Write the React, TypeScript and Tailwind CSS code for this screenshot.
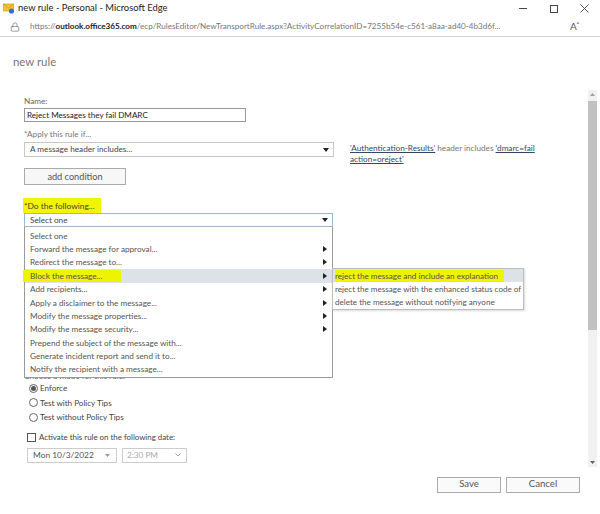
import { Lock } from "lucide-react";

const font = { fontFamily: 'Lato, "Open Sans", sans-serif' };

const actions = [
  { label: "Select one", sub: false },
  { label: "Forward the message for approval...", sub: true },
  { label: "Redirect the message to...", sub: true },
  { label: "Block the message...", sub: true, active: true },
  { label: "Add recipients...", sub: true },
  { label: "Apply a disclaimer to the message...", sub: true },
  { label: "Modify the message properties...", sub: true },
  { label: "Modify the message security...", sub: true },
  { label: "Prepend the subject of the message with...", sub: false },
  { label: "Generate incident report and send it to...", sub: false },
  { label: "Notify the recipient with a message...", sub: false },
];

const blockOptions = [
  "reject the message and include an explanation",
  "reject the message with the enhanced status code of",
  "delete the message without notifying anyone",
];

const Caret = () => (
  <svg width="6" height="4" viewBox="0 0 6 4" className="shrink-0">
    <path d="M0 0h6L3 4z" fill="#222" />
  </svg>
);

const SubArrow = () => (
  <svg width="4" height="6" viewBox="0 0 4 6" className="shrink-0">
    <path d="M0 0l4 3-4 3z" fill="#222" />
  </svg>
);

const TitleBar = () => (
  <div className="flex h-[17px] items-center bg-white pl-[3px]">
    <svg width="12" height="11" viewBox="0 0 12 11">
      <rect x="0.5" y="1" width="10" height="7" fill="#f4c430" stroke="#c9961a" strokeWidth="0.6" />
      <path d="M0.5 1l5 4 5-4" fill="none" stroke="#b7851a" strokeWidth="0.6" />
      <circle cx="8.5" cy="8" r="2.6" fill="#3a6fc4" />
    </svg>
    <span className="ml-[3px] text-[9.4px] text-[#222]">new rule - Personal - Microsoft Edge</span>
    <div className="ml-auto flex items-center">
      <div className="w-[31px] flex justify-center">
        <div className="h-px w-[8px] bg-[#444]" />
      </div>
      <div className="w-[31px] flex justify-center">
        <div className="h-[8px] w-[8px] border border-[#444]" />
      </div>
      <div className="w-[31px] flex justify-center">
        <svg width="9" height="9" viewBox="0 0 9 9">
          <path d="M0.5 0.5l8 8M8.5 0.5l-8 8" stroke="#444" strokeWidth="0.9" />
        </svg>
      </div>
    </div>
  </div>
);

const AddressBar = () => (
  <div className="flex h-[20px] items-center border-b border-[#d4d4d4] bg-white pl-[10px]">
    <Lock size={10} strokeWidth={1.5} color="#666" />
    <span className="ml-[10px] whitespace-nowrap text-[8.1px] text-[#777]">
      https://<span className="font-bold text-[#1a1a1a]">outlook.office365.com</span>
      /ecp/RulesEditor/NewTransportRule.aspx?ActivityCorrelationID=7255b54e-c561-a8aa-ad40-4b3d6f...
    </span>
    <span className="ml-auto mr-[21px] text-[10px] text-[#555]">
      A<sup className="text-[6px]">ᴬ</sup>
    </span>
  </div>
);

const Scrollbar = () => (
  <div className="mt-[53px] mr-[3px] flex h-[377px] w-[9px] flex-col items-center bg-[#f1f1f1]">
    <svg width="5" height="3" viewBox="0 0 5 3" className="mt-[3px]">
      <path d="M0 3l2.5-3 2.5 3z" fill="#a0a0a0" />
    </svg>
    <div className="mt-[5px] h-[229px] w-[9px] bg-[#c1c1c1]" />
    <svg width="5" height="3" viewBox="0 0 5 3" className="mt-auto mb-[3px]">
      <path d="M0 0h5l-2.5 3z" fill="#606060" />
    </svg>
  </div>
);

const Radio = ({ label, checked }: { label: string; checked?: boolean }) => (
  <div className="flex h-[14.5px] items-center">
    <div className="flex h-[9px] w-[9px] items-center justify-center rounded-full border border-[#666] bg-white">
      {checked && <div className="h-[5px] w-[5px] rounded-full bg-[#555]" />}
    </div>
    <span className="ml-[2px] text-[8.1px] text-[#444]">{label}</span>
  </div>
);

export default function App() {
  return (
    <div className="flex h-[514px] w-[600px] flex-col overflow-hidden bg-white" style={font}>
      <TitleBar />
      <AddressBar />
      <div className="flex flex-1">
        <div className="flex-1">
          <div className="mt-[17px] ml-[13px] h-[15px] text-[11.4px] leading-[15px] text-[#777]">new rule</div>

          <div className="relative pl-[24px]">
            <div className="mt-[27px] h-[10px] text-[8.2px] leading-[10px] text-[#666]">Name:</div>
            <div className="mt-[2px] flex h-[14px] w-[222px] items-center border border-[#999] pl-[2px] text-[8.1px] text-[#222]">
              Reject Messages they fail DMARC
            </div>

            <div className="mt-[7px] h-[10px] text-[8.2px] leading-[10px] text-[#777]">*Apply this rule if...</div>
            <div className="mt-[3px] flex h-[15px] items-start">
              <div className="flex h-[15px] w-[310px] shrink-0 items-center justify-between border border-[#c8c8c8] pl-[5px] pr-[4px] text-[8.2px] text-[#444]">
                A message header includes...
                <Caret />
              </div>
              <div className="ml-[16px] mt-[1px] whitespace-nowrap text-[8.2px] leading-[11px] text-[#777]">
                <span className="text-[#2f4a66] underline">'Authentication-Results'</span> header includes{" "}
                <span className="text-[#2f4a66] underline">'dmarc=fail</span>
                <br />
                <span className="text-[#2f4a66] underline">action=oreject'</span>
              </div>
            </div>

            <div className="mt-[11px] flex h-[17px] w-[102px] items-center justify-center border border-[#aaa] bg-[#f7f7f7] text-[9.2px] text-[#555]">
              add condition
            </div>

            <div className="relative mt-[16px] h-[10px] w-fit text-[8.4px] leading-[10px] text-[#444]">
              <div className="absolute -left-[1px] -top-[3px] h-[15px] w-[78px] bg-[#f2f500]" />
              <span className="relative">*Do the following...</span>
            </div>

            <div className="relative mt-[2px] w-[309px]">
              <div className="flex h-[14px] items-center justify-between border border-[#9db6cc] pl-[5px] pr-[4px] text-[8.2px] text-[#444]">
                Select one
                <Caret />
              </div>

              <div className="absolute left-0 top-full z-10 w-[309px] border border-t-0 border-[#9a9a9a] bg-white pt-[2px] pb-[1px]">
                {actions.map((a) => (
                  <div
                    key={a.label}
                    className={`relative flex h-[13.4px] items-center justify-between pl-[5px] pr-[5px] text-[8.2px] text-[#555] ${
                      a.active ? "bg-[#dde1e8]" : ""
                    }`}
                  >
                    {a.active && <div className="absolute left-[-2px] top-[1px] h-[12px] w-[98px] bg-[#eef300]" />}
                    <span className="relative">{a.label}</span>
                    {a.sub && <SubArrow />}
                  </div>
                ))}
              </div>

              <div className="absolute left-[308px] top-[55px] z-20 w-[192px] border border-[#bdbdbd] bg-white shadow-[1px_1px_2px_rgba(0,0,0,0.15)]">
                {blockOptions.map((o, i) => (
                  <div
                    key={o}
                    className={`flex h-[13.3px] items-center pl-[2px] text-[8.1px] text-[#555] ${
                      i === 0 ? "bg-[#dde1e8]" : ""
                    }`}
                  >
                    <span className={`whitespace-nowrap pr-[6px] ${i === 0 ? "bg-[#eef300]" : ""}`}>{o}</span>
                  </div>
                ))}
              </div>
            </div>

            <div className="mt-[144px] h-[10px] text-[8.2px] leading-[10px] text-[#666]">Choose a mode for this rule:</div>
            <div className="ml-[5px] flex flex-col">
              <Radio label="Enforce" checked />
              <Radio label="Test with Policy Tips" />
              <Radio label="Test without Policy Tips" />
            </div>

            <div className="mt-[6px] ml-[3px] flex h-[14px] items-center">
              <div className="h-[9px] w-[9px] border border-[#555] bg-white" />
              <span className="ml-[3px] text-[7.9px] text-[#444]">Activate this rule on the following date:</span>
            </div>

            <div className="mt-[3px] ml-[3px] flex gap-[5px]">
              <div className="flex h-[15px] w-[90px] items-center justify-between border border-[#ccc] pl-[5px] pr-[6px] text-[8.4px] text-[#555]">
                Mon 10/3/2022
                <svg width="5" height="3" viewBox="0 0 5 3">
                  <path d="M0 0h5l-2.5 3z" fill="#999" />
                </svg>
              </div>
              <div className="flex h-[15px] w-[65px] items-center justify-between border border-[#ccc] pl-[4px] pr-[5px] text-[8.2px] text-[#aaa]">
                2:30 PM
                <svg width="6" height="4" viewBox="0 0 6 4">
                  <path d="M0.5 0.5l2.5 2.5 2.5-2.5" fill="none" stroke="#888" strokeWidth="0.8" />
                </svg>
              </div>
            </div>

            <div className="mt-[14px] mr-[8px] flex justify-end gap-[5px]">
              <div className="flex h-[16px] w-[64px] items-center justify-center border border-[#aaa] bg-[#fafafa] text-[9.6px] text-[#555]">
                Save
              </div>
              <div className="flex h-[16px] w-[74px] items-center justify-center border border-[#aaa] bg-[#fafafa] text-[9.6px] text-[#555]">
                Cancel
              </div>
            </div>
          </div>
        </div>
        <Scrollbar />
      </div>
    </div>
  );
}
